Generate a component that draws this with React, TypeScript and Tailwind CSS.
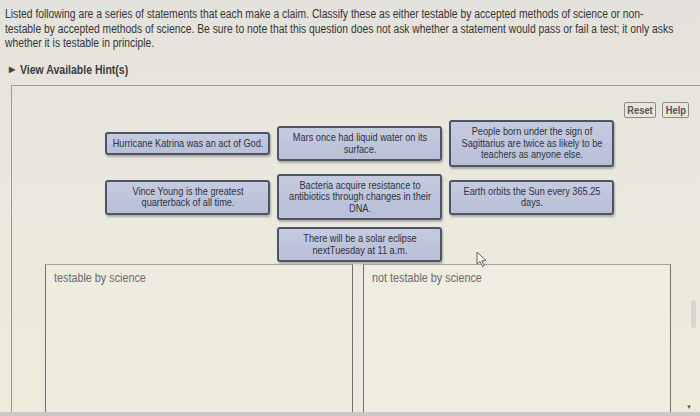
import React from "react";

const cardCls =
  "w-[165px] rounded-[3px] border-2 border-[#4d5466] bg-gradient-to-b from-[#c5cbdf] to-[#b8bfd7] py-[4px] text-center text-[11px] leading-[11.5px] text-[#2d323d] shadow-[1px_2px_2px_rgba(60,60,70,0.35)] whitespace-nowrap flex flex-col items-center";

function Card({ lines }: { lines: string[] }) {
  return (
    <div className={cardCls}>
      {lines.map((l, i) => (
        <div key={i} className="w-[220px] scale-x-[0.835] origin-center">
          {l}
        </div>
      ))}
    </div>
  );
}

export default function App() {
  return (
    <div
      className="relative w-[700px] h-[416px] overflow-hidden bg-gradient-to-b from-[#e4e2dc] via-[#ebe8dd] to-[#efebdc] text-[#383838]"
      style={{ fontFamily: '"Liberation Sans", Arial, sans-serif' }}
    >
      <div className="pt-[7px] pl-[5px] text-[12px] leading-[14.5px] whitespace-nowrap text-[#353535]">
        <div className="w-[800px] scale-x-[0.86] origin-left">
          Listed following are a series of statements that each make a claim. Classify these as either testable by accepted methods of science or non-
        </div>
        <div className="w-[800px] scale-x-[0.86] origin-left">
          testable by accepted methods of science. Be sure to note that this question does not ask whether a statement would pass or fail a test; it only asks
        </div>
        <div className="w-[800px] scale-x-[0.86] origin-left">whether it is testable in principle.</div>
      </div>

      <div className="mt-[10px] ml-[9px] flex items-center gap-[5px] text-[12.5px] font-bold text-[#3d3d3d]">
        <span className="text-[8px] text-[#444]">▶</span>
        <span className="scale-x-[0.84] origin-left">View Available Hint(s)</span>
      </div>

      <div className="mt-[6px] ml-[11px] h-[340px] border-t border-l border-[#9c9a92] flex flex-col">
        <div className="flex justify-end gap-[6px] pt-[16px] pr-[11px]">
          <div className="rounded-[2px] border border-[#8c8b86] w-[32px] h-[16px] leading-[14px] text-center text-[11px] font-bold text-[#555]">
            <span className="inline-block scale-x-[0.85]">Reset</span>
          </div>
          <div className="rounded-[2px] border border-[#8c8b86] w-[27px] h-[16px] leading-[14px] text-center text-[11px] font-bold text-[#555]">
            <span className="inline-block scale-x-[0.85]">Help</span>
          </div>
        </div>

        <div className="ml-[93px] mt-[2px] grid grid-cols-[165px_165px_165px] gap-x-[7px] gap-y-[7px] items-center">
          <Card lines={["Hurricane Katrina was an act of God."]} />
          <Card lines={["Mars once had liquid water on its", "surface."]} />
          <Card lines={["People born under the sign of", "Sagittarius are twice as likely to be", "teachers as anyone else."]} />
          <Card lines={["Vince Young is the greatest", "quarterback of all time."]} />
          <Card lines={["Bacteria acquire resistance to", "antibiotics through changes in their", "DNA."]} />
          <Card lines={["Earth orbits the Sun every 365.25", "days."]} />
          <div />
          <Card lines={["There will be a solar eclipse", "nextTuesday at 11 a.m."]} />
          <div />
        </div>

        <div className="ml-[33px] mt-[2px] flex gap-[10px] flex-1">
          <div className="w-[308px] border-t border-x-[1.5px] border-t-[#a4a39c] border-x-[#6f6f78] bg-[#eeebdf] px-[8px] pt-[4px] text-[12px] text-[#6b6b6b]">
            <div className="scale-x-[0.9] origin-left whitespace-nowrap">testable by science</div>
          </div>
          <div className="w-[308px] border-t border-x-[1.5px] border-t-[#a4a39c] border-x-[#6f6f78] bg-[#efece0] px-[8px] pt-[4px] text-[12px] text-[#6b6b6b]">
            <div className="scale-x-[0.9] origin-left whitespace-nowrap">not testable by science</div>
          </div>
        </div>
      </div>

      {/* scrollbar hints */}
      <div className="absolute right-[4px] top-[300px] w-[5px] h-[28px] rounded-sm bg-[#d6d6d2]" />
      <div className="absolute right-[8px] top-[403px] text-[6px] text-[#555]">▼</div>
      <div className="absolute left-0 bottom-0 w-full h-[4px] bg-[#c9c9c6]" />

      {/* mouse cursor */}
      <svg className="absolute left-[476px] top-[251px]" width="12" height="17" viewBox="0 0 12 17">
        <path d="M1 1 L1 13 L4 10.5 L6.5 15.5 L8.3 14.6 L5.9 9.8 L10 9.6 Z" fill="#f4f3ee" stroke="#555" strokeWidth="0.9" strokeLinejoin="round" />
      </svg>
    </div>
  );
}
